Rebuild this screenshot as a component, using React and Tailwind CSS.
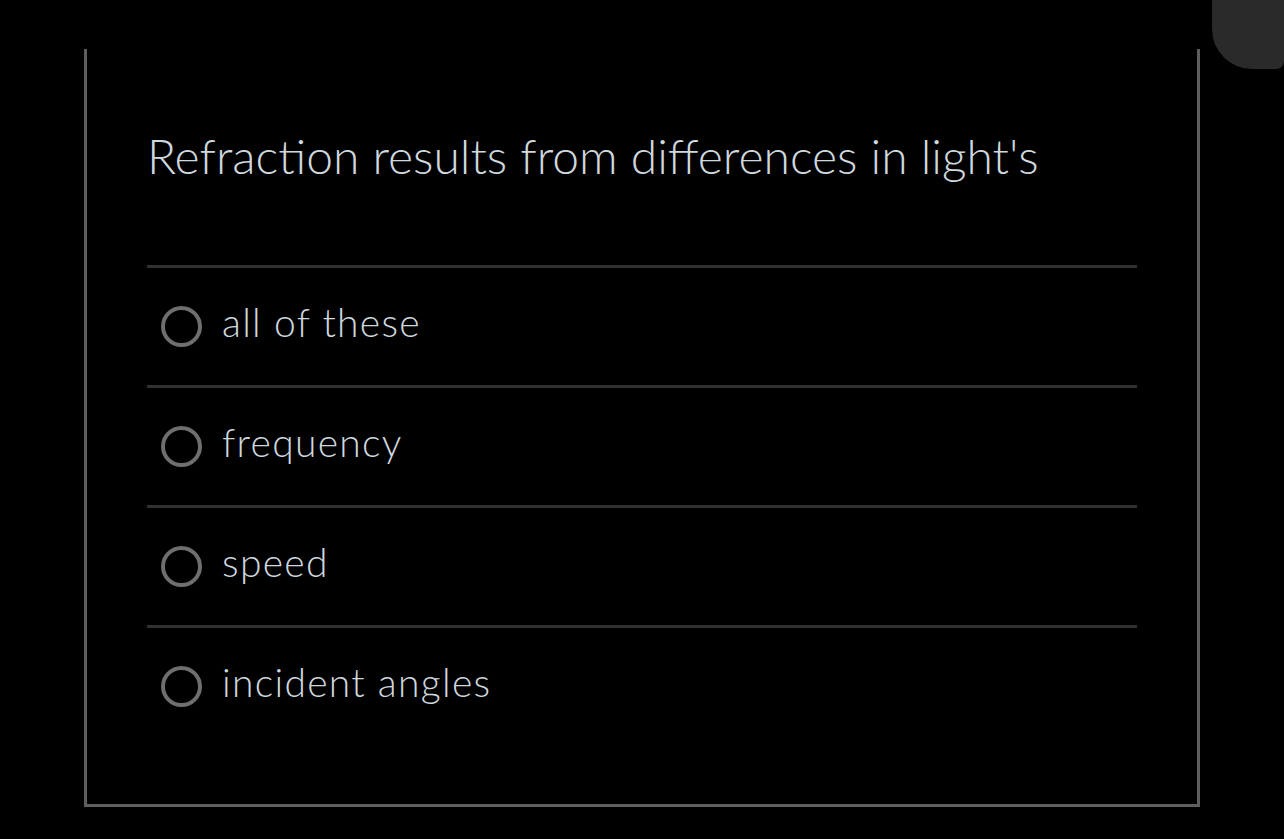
const OPTIONS = ['all of these', 'frequency', 'speed', 'incident angles']

export default function App() {
  return (
    <div className="relative w-[1284px] h-[839px] bg-black overflow-hidden" style={{ fontFamily: 'Lato, "Open Sans", sans-serif' }}>
      <div className="absolute top-0 right-0 w-[72px] h-[69px] bg-[#2a2a2a] rounded-bl-[40px] rounded-br-[8px]" />

      <div className="ml-[84px] mt-[49px] w-[1116px] border-x-[3px] border-b-[3px] border-[#5e5e5e] px-[60px] pt-[78px] pb-[59px]">
        <h1 className="text-[48px] leading-[58px] font-light text-[#cfd8df] mb-[80px]">Refraction results from differences in light's</h1>

        <div>
          {OPTIONS.map(o => (
            <label key={o} className="flex items-center h-[120px] border-t-[3px] border-[#303030]">
              <span className="ml-[14px] w-[41px] h-[41px] rounded-full border-[4px] border-[#6f6f71] shrink-0" />
              <span className="ml-[20px] mb-[8px] text-[39px] leading-[47px] tracking-[1.3px] font-light text-[#cfd8df]">{o}</span>
            </label>
          ))}
        </div>
      </div>
    </div>
  )
}
